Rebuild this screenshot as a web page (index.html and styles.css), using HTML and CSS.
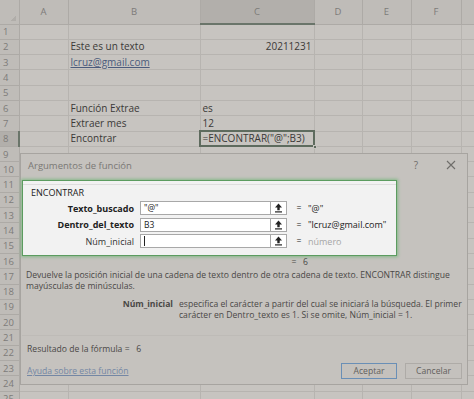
FILE: index.html
```html
<html>
    <head>
        <title>Argumentos de función</title>
        <meta name="viewport" content="width=device-width, initial-scale=1.0">
        <link rel="stylesheet" href="styles.css">
    </head>
    <body>
        <table class="sheet">
            <colgroup>
                <col style="width:19px"><col style="width:49px"><col style="width:132px"><col style="width:114px">
                <col style="width:48px"><col style="width:49px"><col style="width:50px"><col style="width:13px">
            </colgroup>
            <tr class="head"><th class="corner"></th><th>A</th><th>B</th><th class="sel">C</th><th>D</th><th>E</th><th>F</th><th></th></tr>
            <tr><th>1</th><td></td><td></td><td></td><td></td><td></td><td></td><td></td></tr>
            <tr><th>2</th><td></td><td>Este es un texto</td><td class="num">20211231</td><td></td><td></td><td></td><td></td></tr>
            <tr><th>3</th><td></td><td><span class="link">lcruz@gmail.com</span></td><td></td><td></td><td></td><td></td><td></td></tr>
            <tr><th>4</th><td></td><td></td><td></td><td></td><td></td><td></td><td></td></tr>
            <tr><th>5</th><td></td><td></td><td></td><td></td><td></td><td></td><td></td></tr>
            <tr><th>6</th><td></td><td>Función Extrae</td><td>es</td><td></td><td></td><td></td><td></td></tr>
            <tr><th>7</th><td></td><td>Extraer mes</td><td>12</td><td></td><td></td><td></td><td></td></tr>
            <tr><th class="sel-row">8</th><td></td><td>Encontrar</td><td class="active">=ENCONTRAR("@";B3)<i class="handle"></i></td><td></td><td></td><td></td><td></td></tr>
            <tr><th>9</th><td></td><td></td><td></td><td></td><td></td><td></td><td></td></tr>
            <tr><th>10</th><td></td><td></td><td></td><td></td><td></td><td></td><td></td></tr>
            <tr><th>11</th><td></td><td></td><td></td><td></td><td></td><td></td><td></td></tr>
            <tr><th>12</th><td></td><td></td><td></td><td></td><td></td><td></td><td></td></tr>
            <tr><th>13</th><td></td><td></td><td></td><td></td><td></td><td></td><td></td></tr>
            <tr><th>14</th><td></td><td></td><td></td><td></td><td></td><td></td><td></td></tr>
            <tr><th>15</th><td></td><td></td><td></td><td></td><td></td><td></td><td></td></tr>
            <tr><th>16</th><td></td><td></td><td></td><td></td><td></td><td></td><td></td></tr>
            <tr><th>17</th><td></td><td></td><td></td><td></td><td></td><td></td><td></td></tr>
            <tr><th>18</th><td></td><td></td><td></td><td></td><td></td><td></td><td></td></tr>
            <tr><th>19</th><td></td><td></td><td></td><td></td><td></td><td></td><td></td></tr>
            <tr><th>20</th><td></td><td></td><td></td><td></td><td></td><td></td><td></td></tr>
            <tr><th>21</th><td></td><td></td><td></td><td></td><td></td><td></td><td></td></tr>
            <tr><th>22</th><td></td><td></td><td></td><td></td><td></td><td></td><td></td></tr>
            <tr><th>23</th><td></td><td></td><td></td><td></td><td></td><td></td><td></td></tr>
            <tr><th>24</th><td></td><td></td><td></td><td></td><td></td><td></td><td></td></tr>
            <tr><th>25</th><td></td><td></td><td></td><td></td><td></td><td></td><td></td></tr>
        </table>

        <div class="dialog">
            <div class="title-bar">
                <span class="title">Argumentos de función</span>
                <span class="help">?</span>
                <svg class="close" width="10" height="10" viewBox="0 0 10 10"><path d="M1 1 L9 9 M9 1 L1 9" stroke="#6f6d6a" stroke-width="1.1" fill="none"/></svg>
            </div>

            <div class="args">
                <div class="fn-name">ENCONTRAR</div>
                <div class="arg">
                    <span class="arg-label bold">Texto_buscado</span>
                    <span class="arg-input">"@"</span>
                    <span class="ref-btn"><svg width="9" height="10" viewBox="0 0 9 10"><path d="M4.5 0.5 L1 4.5 H3.3 V7.3 H5.7 V4.5 H8 Z" fill="#222"/><rect x="1" y="8.3" width="7" height="1.2" fill="#222"/></svg></span>
                    <span class="eq">=</span>
                    <span class="arg-value">"@"</span>
                </div>
                <div class="arg">
                    <span class="arg-label bold">Dentro_del_texto</span>
                    <span class="arg-input">B3</span>
                    <span class="ref-btn"><svg width="9" height="10" viewBox="0 0 9 10"><path d="M4.5 0.5 L1 4.5 H3.3 V7.3 H5.7 V4.5 H8 Z" fill="#222"/><rect x="1" y="8.3" width="7" height="1.2" fill="#222"/></svg></span>
                    <span class="eq">=</span>
                    <span class="arg-value">"lcruz@gmail.com"</span>
                </div>
                <div class="arg">
                    <span class="arg-label">Núm_inicial</span>
                    <span class="arg-input"><i class="caret"></i></span>
                    <span class="ref-btn"><svg width="9" height="10" viewBox="0 0 9 10"><path d="M4.5 0.5 L1 4.5 H3.3 V7.3 H5.7 V4.5 H8 Z" fill="#222"/><rect x="1" y="8.3" width="7" height="1.2" fill="#222"/></svg></span>
                    <span class="eq">=</span>
                    <span class="arg-value muted">número</span>
                </div>
            </div>

            <div class="result-line"><span class="eq">=</span><span>6</span></div>

            <p class="desc">Devuelve la posición inicial de una cadena de texto dentro de otra cadena de texto. ENCONTRAR distingue mayúsculas de minúsculas.</p>

            <div class="arg-help">
                <span class="arg-help-name">Núm_inicial</span>
                <span class="arg-help-text">especifica el carácter a partir del cual se iniciará la búsqueda. El primer carácter en Dentro_texto es 1. Si se omite, Núm_inicial = 1.</span>
            </div>

            <div class="footer">
                <div class="footer-left">
                    <div class="formula-result">Resultado de la fórmula =&nbsp;&nbsp;&nbsp;6</div>
                    <span class="help-link">Ayuda sobre esta función</span>
                </div>
                <div class="buttons">
                    <span class="btn primary">Aceptar</span>
                    <span class="btn">Cancelar</span>
                </div>
            </div>
        </div>
    </body>
</html>
```
FILE: styles.css
```css
* {
    box-sizing: border-box;
}

html, body {
    margin: 0;
    padding: 0;
    width: 474px;
    height: 399px;
    overflow: hidden;
    background-color: #c7c4c0;
    font-family: "Open Sans", "Noto Sans", sans-serif;
}

.sheet {
    border-collapse: collapse;
    table-layout: fixed;
    width: 474px;
    font-size: 10px;
    color: #3b3937;
}

.sheet tr {
    height: 15.3px;
}

.sheet tr.head {
    height: 24px;
}

.sheet td {
    border-right: 1px solid #b7b4b0;
    border-bottom: 1px solid #b7b4b0;
    padding: 0 2px;
    white-space: nowrap;
    overflow: visible;
    line-height: 13px;
}

.sheet th {
    background-color: #bfbcb8;
    color: #7d7b78;
    font-weight: normal;
    font-size: 9.5px;
    border-right: 1px solid #adaaa6;
    border-bottom: 1px solid #adaaa6;
    padding: 0;
}

.sheet tr:not(.head) th {
    text-align: left;
    padding-left: 3px;
}

.sheet th.corner {
    background: linear-gradient(135deg, transparent 60%, #b0ada9 60%) no-repeat;
    background-size: 7px 7px;
    background-position: right 3px bottom 3px;
    background-color: #bfbcb8;
}

.sheet th.sel {
    background-color: #b2afab;
    border-bottom: 2px solid #6a756a;
}

.sheet th.sel-row {
    border-right: 2px solid #6a756a;
    background-color: #b2afab;
}

.sheet td.num {
    text-align: right;
}

.sheet .link {
    color: #4b5b7c;
    text-decoration: underline;
}

.sheet td.active {
    position: relative;
    outline: 2px solid #5e6b5e;
    outline-offset: -1px;
}

.handle {
    position: absolute;
    right: -3px;
    bottom: -3px;
    width: 4px;
    height: 4px;
    background-color: #5e6b5e;
    border: 1px solid #c7c4c0;
}

.dialog {
    position: absolute;
    left: 20px;
    top: 153px;
    width: 448px;
    height: 232px;
    background-color: #c5c2be;
    border: 1px solid #a7a4a0;
    font-size: 8.6px;
    color: #4a4846;
    display: flex;
    flex-direction: column;
}

.title-bar {
    height: 22px;
    display: flex;
    align-items: center;
    padding-left: 7px;
}

.title {
    flex: 1;
    color: #7a7875;
    font-size: 9.5px;
}

.help {
    color: #6f6d6a;
    font-size: 10px;
    margin-right: 28px;
}

.close {
    margin-right: 11px;
}

.args {
    margin-top: 4px;
    margin-left: 1px;
    width: 375px;
    height: 76px;
    background-color: #f2f2f2;
    border: 1.5px solid #5c9c60;
    box-shadow: 0 0 3px 1px #86b988;
    padding: 0 0 0 8px;
    color: #222;
}

.fn-name {
    margin-top: 3px;
    padding-top: 1px;
    border-top: 1px solid #dedede;
    margin-left: -8px;
    padding-left: 8px;
    font-size: 9px;
    height: 14px;
}

.arg {
    display: flex;
    align-items: center;
    height: 14px;
    margin-top: 3px;
}

.arg + .arg {
    margin-top: 2.5px;
}

.arg-label {
    width: 109px;
    text-align: right;
    padding-right: 6px;
    color: #333;
    font-size: 9px;
}

.bold {
    font-weight: bold;
    color: #222;
}

.arg-input {
    width: 131px;
    height: 14px;
    background-color: #fff;
    border: 1px solid #a8a8a8;
    padding-left: 3px;
    font-size: 8.5px;
    line-height: 12px;
    display: flex;
    align-items: center;
}

.caret {
    display: block;
    width: 1px;
    height: 10px;
    background-color: #222;
}

.ref-btn {
    width: 16px;
    height: 14px;
    background-color: #fff;
    border: 1px solid #a8a8a8;
    border-left: none;
    display: flex;
    align-items: center;
    justify-content: center;
}

.eq {
    width: 21px;
    text-align: center;
    padding-left: 3px;
}

.arg-value {
    padding-left: 0;
    font-size: 9px;
}

.muted {
    color: #a6a6a6;
}

.result-line {
    display: flex;
    margin-left: 261px;
    margin-top: 1px;
    height: 11px;
    line-height: 11px;
}

.result-line .eq {
    width: 21px;
}

.desc {
    margin: 2px 0 0 5px;
    width: 430px;
    line-height: 10.5px;
    color: #4a4846;
}

.arg-help {
    display: flex;
    margin-top: 8px;
    line-height: 10.5px;
}

.arg-help-name {
    width: 158px;
    text-align: right;
    font-weight: bold;
    padding-right: 6px;
    color: #4a4846;
}

.arg-help-text {
    width: 284px;
}

.footer {
    margin-top: auto;
    border-top: 1px solid #bebbb7;
    margin-left: 1px;
    margin-right: 1px;
    height: 49px;
    display: flex;
    justify-content: space-between;
    padding: 8px 4px 0 5px;
}

.formula-result {
    line-height: 11px;
}

.help-link {
    display: block;
    margin-top: 10px;
    color: #7487a4;
    text-decoration: underline;
}

.buttons {
    display: flex;
    gap: 8px;
    margin-top: 19px;
}

.btn {
    width: 57px;
    height: 16px;
    border: 1px solid #aeaba7;
    background-color: #c4c1bd;
    display: flex;
    align-items: center;
    justify-content: center;
    color: #625f5c;
}

.btn.primary {
    border: 1.5px solid #6a8fb6;
    width: 56px;
}
```
